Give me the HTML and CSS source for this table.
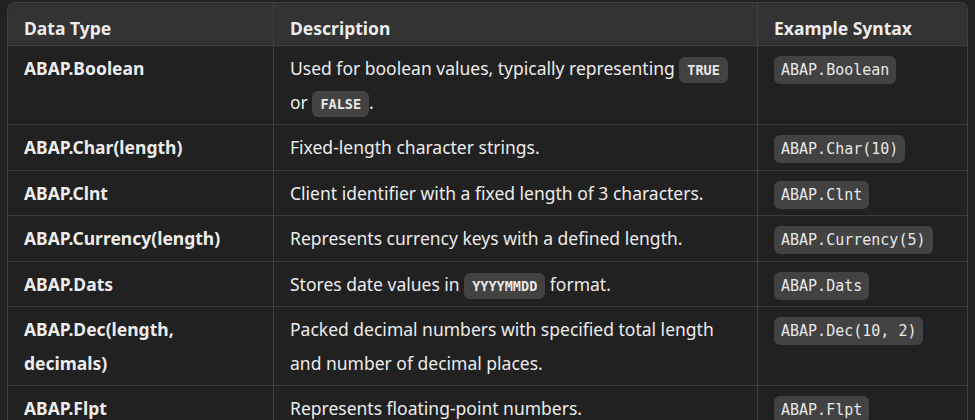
FILE: index.html
```html
<!DOCTYPE html>
<html>
<head>
<meta charset="utf-8">
<link rel="stylesheet" href="styles.css">
</head>
<body>
<div class="wrap">
<table class="dt">
  <colgroup><col class="c1"><col class="c2"><col class="c3"></colgroup>
  <thead>
    <tr><th>Data Type</th><th>Description</th><th>Example Syntax</th></tr>
  </thead>
  <tbody>
    <tr><td class="name">ABAP.Boolean</td><td>Used for boolean values, typically representing <code class="sm">TRUE</code> or <code class="sm">FALSE</code>.</td><td><code>ABAP.Boolean</code></td></tr>
    <tr><td class="name">ABAP.Char(length)</td><td>Fixed-length character strings.</td><td><code>ABAP.Char(10)</code></td></tr>
    <tr><td class="name">ABAP.Clnt</td><td>Client identifier with a fixed length of 3 characters.</td><td><code>ABAP.Clnt</code></td></tr>
    <tr><td class="name">ABAP.Currency(length)</td><td>Represents currency keys with a defined length.</td><td><code>ABAP.Currency(5)</code></td></tr>
    <tr><td class="name">ABAP.Dats</td><td>Stores date values in <code class="sm">YYYYMMDD</code> format.</td><td><code>ABAP.Dats</code></td></tr>
    <tr><td class="name">ABAP.Dec(length, decimals)</td><td>Packed decimal numbers with specified total length and number of decimal places.</td><td><code>ABAP.Dec(10, 2)</code></td></tr>
    <tr><td class="name">ABAP.Flpt</td><td>Represents floating-point numbers.</td><td><code>ABAP.Flpt</code></td></tr>
  </tbody>
</table>
</div>
</body>
</html>
```

FILE: styles.css
```css
html, body {
  margin: 0;
  padding: 0;
  background: #212121;
}
body {
  font-family: "Noto Sans", "Open Sans", sans-serif;
  font-size: 17.5px;
  color: #ececec;
}
.wrap {
  padding: 2px 0 0 7px;
}
.dt {
  width: 961px;
  table-layout: fixed;
  border-collapse: separate;
  border-spacing: 0;
  border: 1px solid #404040;
  border-bottom: none;
  border-radius: 8px 8px 0 0;
  overflow: hidden;
}
.c1 { width: 265px; }
.c2 { width: 484px; }
.c3 { width: 210px; }
th {
  background: #333333;
  font-weight: 700;
  text-align: left;
  vertical-align: top;
  height: 42px;
  padding: 9px 16px 0;
  box-sizing: border-box;
  line-height: 33px;
  border-bottom: 1px solid #404040;
}
th + th, td + td {
  border-left: 1px solid #404040;
}
td {
  vertical-align: top;
  padding: 6px 16px 5px;
  line-height: 33.5px;
  border-bottom: 1px solid #3c3c3c;
}
td.name {
  font-weight: 700;
}
code {
  font-family: "DejaVu Sans Mono", "Liberation Mono", monospace;
  font-size: 15px;
  line-height: 1;
  background: #424242;
  color: #e8e8e8;
  border-radius: 6px;
  padding: 5px 7px;
}
code.sm {
  font-size: 13.5px;
  font-weight: 700;
  padding: 5px 8px;
}
```
